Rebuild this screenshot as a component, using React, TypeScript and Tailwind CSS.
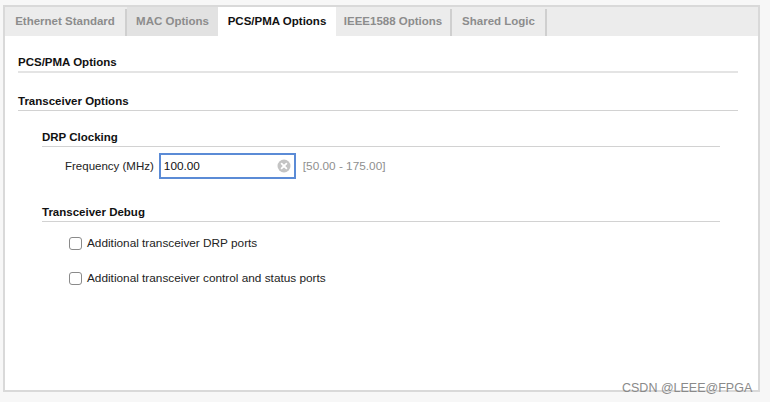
import React from "react";

const tabs = [
  { label: "Ethernet Standard", w: "w-[120px]", state: "idle" },
  { label: "sep" },
  { label: "MAC Options", w: "w-[91px]", state: "hover" },
  { label: "PCS/PMA Options", w: "w-[118px]", state: "active" },
  { label: "IEEE1588 Options", w: "w-[114px]", state: "idle" },
  { label: "sep" },
  { label: "Shared Logic", w: "w-[93px]", state: "idle" },
  { label: "sep" },
];

function Checkbox({ label, className }: { label: string; className: string }) {
  return (
    <div className={"flex items-center h-[14px] " + className}>
      <div className="w-[13px] h-[13px] rounded-[3px] border border-[#8a8a8a] bg-white" />
      <span className="ml-[5px] text-[11.8px] leading-[14px] text-[#222]">{label}</span>
    </div>
  );
}

export default function App() {
  return (
    <div
      className="w-[770px] h-[402px] bg-[#f7f7f7] pt-[5px] pl-[3px] relative overflow-hidden"
      style={{ fontFamily: '"Liberation Sans", Arial, sans-serif' }}
    >
      <div className="w-[757px] h-[387px] border-2 border-[#d9d9d9] bg-white flex flex-col">
        <div className="h-[29px] bg-[#ececec] flex items-stretch shrink-0">
          {tabs.map((t, i) =>
            t.label === "sep" ? (
              <div key={i} className="w-[2px] mt-[2px] bg-[#cfcfcf]" />
            ) : (
              <div
                key={i}
                className={
                  t.w +
                  " flex items-center justify-center text-[11.5px] font-bold " +
                  (t.state === "active"
                    ? "bg-white text-[#111]"
                    : t.state === "hover"
                    ? "bg-[#e2e2e2] text-[#8c8c8c]"
                    : "text-[#8c8c8c]")
                }
              >
                {t.label}
              </div>
            )
          )}
        </div>
        <div className="pl-[13px] pr-[20px] flex flex-col">
          <div className="mt-[19px] pb-[2px] border-b-2 border-[#e4e4e4] text-[11.5px] leading-[14px] font-bold text-[#111]">
            PCS/PMA Options
          </div>
          <div className="mt-[21px] pb-[2px] border-b border-[#d2d2d2] text-[11.5px] leading-[14px] font-bold text-[#111]">
            Transceiver Options
          </div>
          <div className="ml-[24px] mr-[18px] flex flex-col">
            <div className="mt-[19px] pb-[2px] border-b border-[#d2d2d2] text-[11.5px] leading-[14px] font-bold text-[#111]">
              DRP Clocking
            </div>
            <div className="mt-[6px] ml-[23px] flex items-center">
              <span className="text-[11.5px] leading-[14px] text-[#222]">Frequency (MHz)</span>
              <div className="ml-[5px] w-[137px] h-[26px] border-2 border-[#5b8bd6] flex items-center pl-[3px] pr-[3px]">
                <span className="text-[11.8px] leading-[14px] text-[#111] flex-1">100.00</span>
                <svg width="14" height="14" viewBox="0 0 14 14">
                  <circle cx="7" cy="7" r="6.5" fill="#c4c4c4" />
                  <path d="M4.6 4.6 L9.4 9.4 M9.4 4.6 L4.6 9.4" stroke="#fff" strokeWidth="1.8" strokeLinecap="round" />
                </svg>
              </div>
              <span className="ml-[7px] text-[11.8px] leading-[14px] text-[#8f8f8f]">[50.00 - 175.00]</span>
            </div>
            <div className="mt-[26px] pb-[2px] border-b border-[#d2d2d2] text-[11.5px] leading-[14px] font-bold text-[#111]">
              Transceiver Debug
            </div>
            <Checkbox className="mt-[14px] ml-[27px]" label="Additional transceiver DRP ports" />
            <Checkbox className="mt-[21px] ml-[27px]" label="Additional transceiver control and status ports" />
          </div>
        </div>
      </div>
      <div className="absolute left-[622px] top-[381px] text-[12.5px] leading-[14px] text-[#8a8a8a]">
        CSDN @LEEE@FPGA
      </div>
    </div>
  );
}
